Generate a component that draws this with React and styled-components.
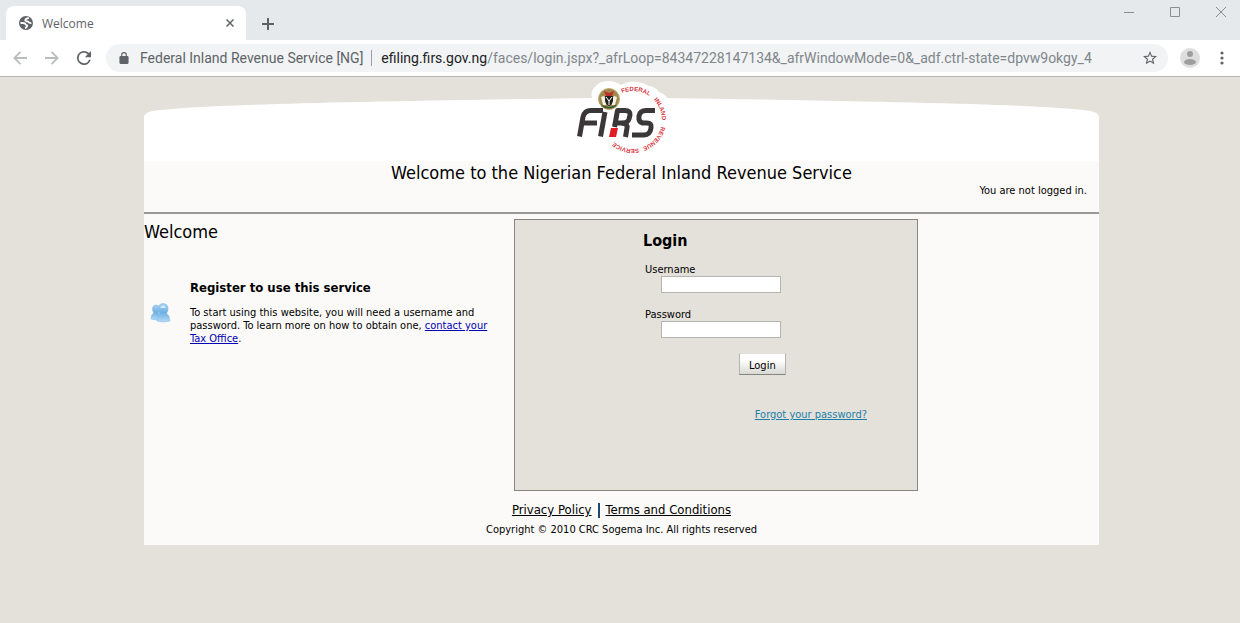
import { useState } from 'react'
import styled, { createGlobalStyle } from 'styled-components'

const uiFont = '"Open Sans", "Noto Sans", sans-serif'
const addressFont = 'Roboto, "Open Sans", sans-serif'
const pageFont = '"DejaVu Sans Condensed", "DejaVu Sans", sans-serif'

const GlobalStyle = createGlobalStyle`
	* {
		box-sizing: border-box;
	}

	body {
		margin: 0;
		background: #e4e1da;
		color: #000;
		font-family: ${pageFont};
		font-size: 11px;
		line-height: 13px;
	}

	svg {
		display: block;
		flex: none;
	}
`

const TabStrip = styled.div`
	display: flex;
	justify-content: space-between;
	height: 40px;
	padding-left: 6px;
	background: #e6e9ec;
`

const TabGroup = styled.div`
	display: flex;
	align-items: flex-end;
`

const Tab = styled.div`
	display: flex;
	align-items: center;
	gap: 9px;
	width: 240px;
	height: 34px;
	padding: 0 8px 0 13px;
	border-radius: 8px 8px 0 0;
	background: #fff;
	color: #5f6368;
	font-family: ${uiFont};
	font-size: 12px;
`

const TabTitle = styled.span`
	flex: 1;
`

const IconButton = styled.button`
	display: flex;
	align-items: center;
	justify-content: center;
	flex: none;
	width: ${({ $width = 32 }) => $width}px;
	height: ${({ $height = 32 }) => $height}px;
	padding: 0;
	border: none;
	background: none;
	color: ${({ $color = '#5f6368' }) => $color};
`

const NewTab = styled(IconButton)`
	margin-left: 6px;
`

const WindowButtons = styled.div`
	display: flex;
	gap: 8px;
`

const Toolbar = styled.div`
	display: flex;
	align-items: center;
	height: 37px;
	padding: 0 2px 0 4px;
	border-bottom: 1px solid #b5b4b2;
	background: #fff;
`

const AddressBar = styled.div`
	display: flex;
	align-items: center;
	flex: 1;
	height: 28px;
	margin: 0 6px;
	padding: 0 2px 0 12px;
	border-radius: 14px;
	background: #f1f3f4;
	color: #5f6368;
	font-family: ${addressFont};
	font-size: 14px;
	line-height: 20px;
	white-space: nowrap;
`

const SiteOwner = styled.span`
	margin-left: 10px;
	padding-right: 8px;
	line-height: 16px;
	border-right: 1px solid #9aa0a6;
`

const Url = styled.span`
	flex: 1;
	min-width: 0;
	overflow: hidden;
	padding-left: 9px;
	color: #80868b;
`

const Host = styled.span`
	color: #202124;
`

const Page = styled.main`
	padding: 0 141px 40px 144px;
`

const Banner = styled.svg`
	width: 100%;
	height: auto;
`

const Sheet = styled.div`
	background: #fbfaf8;
`

const Intro = styled.header`
	height: 53px;
	padding: 1px 12px 0;
	border-bottom: 2px solid #999;
`

const Title = styled.h1`
	margin: 0;
	font-size: 18px;
	font-weight: normal;
	line-height: 22px;
	text-align: center;
`

const Status = styled.p`
	margin: 0;
	text-align: right;
`

const Columns = styled.div`
	display: grid;
	grid-template-columns: 370px 404px;
	padding-top: 5px;
`

const Heading = styled.h2`
	margin: 0;
	font-size: 18px;
	font-weight: normal;
	line-height: 26px;
`

const Register = styled.section`
	display: grid;
	grid-template-columns: 46px 300px;
	align-items: center;
	margin-top: 35px;
`

const PeopleIcon = styled.svg`
	margin-left: 6px;
`

const RegisterTitle = styled.h3`
	margin: 0 0 10px;
	font-size: 13px;
	line-height: 16px;
`

const Text = styled.p`
	margin: 0;
`

const TextLink = styled.a`
	color: #0000b4;
`

const LoginBox = styled.form`
	display: flex;
	flex-direction: column;
	align-items: flex-start;
	height: 272px;
	padding: 11px 50px 0 128px;
	border: 1px solid #858580;
	background: #e4e1da;
`

const LoginTitle = styled.h2`
	margin: 0 0 12px;
	font-size: 16px;
	line-height: 20px;
`

const Field = styled.div`
	display: flex;
	flex-direction: column;
	margin: 0 0 15px 2px;
`

const Input = styled.input`
	width: 120px;
	height: 17px;
	margin-left: 16px;
	padding: 1px 3px;
	border: 1px solid #b4b4b0;
	background: #fff;
	font: inherit;
`

const LoginButton = styled.button`
	height: 22px;
	margin-left: 96px;
	padding: 2px 9px 0;
	border: 1px solid #b4b4b0;
	border-top-color: #e0dfda;
	border-bottom-color: #858580;
	background: linear-gradient(#fff 30%, #d8d8d4);
	color: #000;
	font: inherit;
`

const ForgotLink = styled.a`
	align-self: flex-end;
	margin-top: 33px;
	color: #1d7fa8;
`

const Footer = styled.footer`
	padding: 11px 0 9px;
	text-align: center;
`

const FooterLinks = styled.nav`
	display: flex;
	justify-content: center;
	gap: 6px;
	margin-bottom: 5px;
	font-size: 13px;
	line-height: 16px;
`

const FooterLink = styled.a`
	color: #000;
`

const Divider = styled.span`
	width: 2px;
	margin-top: 1px;
	background: #1c4a6e;
`

const GlobeIcon = () => (
	<svg width="14" height="14" viewBox="0 0 14 14" aria-hidden="true">
		<circle cx="7" cy="7" r="7" fill="#5f6368" />
		<path
			fill="none"
			stroke="#fff"
			strokeWidth="1.800"
			strokeLinejoin="round"
			d="M1.500 7H4Q6 7 6.500 8.200Q7 9.300 8.300 9.300Q8 11.300 6 12.200M9.800 2Q6.500 2.500 6.300 4.200Q6.500 5.500 9 5.500Q10.500 7.500 12.400 7"
		/>
	</svg>
)

// startOffset of every word along the ring
const ringWords = [
	['FEDERAL', 0],
	['INLAND', 34],
	['REVENUE', 63],
	['SERVICE', 96],
]

const Logo = () => (
	<g>
		<path
			fill="#fff"
			d="M430 22H448Q446 14 451 10Q455 4 464 4Q471 4 477 8Q485 3 493 5Q500 6 505 9Q512 10 515 15Q521 17 524 22V84H430Z"
		/>
		<circle cx="465" cy="22" r="10.500" fill="#a08a52" stroke="#c4ad6c" />
		<path fill="#2f5c35" d="M457 27q8 6 16 0l-2 3q-6 3-12 0z" />
		<path fill="#f4f0e4" d="M457 20l3-1 2 3v6h-3zM473 20l-3-1-2 3v6h3z" />
		<path fill="#bd3128" d="M460 14l5 2 5-2-2 5h-6z" />
		<path fill="#25221e" d="M461 19h8v5q-1 4-4 5q-3-1-4-5z" />
		<path stroke="#fff" strokeWidth="1" fill="none" d="M462 20l3 4 3-4M465 24v4" />
		<g fill="none" stroke="#3b3637" strokeWidth="5" strokeLinejoin="round">
			<path d="M435.500 59.500L439 40Q440.500 33.500 447 33.500H459" />
			<path d="M438 46H453" />
			<path d="M456.500 59.500L461 35" />
			<path d="M470.500 50L473.500 33.500H481Q486.500 33.500 486 38L485 42Q484 46 478 46H473" />
			<path d="M478 46Q484 47 483 51L481.500 60" />
			<path d="M511 33.500H502Q496 33.500 495 39Q494 46 500 46H503Q508 46 507 51Q506 58 500 58H488" />
		</g>
		<path fill="#e01b24" d="M467 51h7l-2 9h-7z" />
		<defs>
			<path id="firs-ring" d="M478.100 16.100A29 29 0 1 1 465 59.300" />
		</defs>
		<text fill="#d8323c" fontFamily="Liberation Sans, sans-serif" fontSize="6" fontWeight="bold">
			{ringWords.map(([word, offset]) => (
				<textPath key={word} href="#firs-ring" startOffset={offset}>
					{word}
				</textPath>
			))}
		</text>
	</g>
)

const BrowserBar = () => (
	<div>
		<TabStrip>
			<TabGroup>
				<Tab>
					<GlobeIcon />
					<TabTitle>Welcome</TabTitle>
					<IconButton $width={16} $height={16} aria-label="Close tab">
						<svg width="8" height="8" viewBox="0 0 8 8" stroke="currentColor" strokeWidth="1.500">
							<path d="M0.500 0.500L7.500 7.500M7.500 0.500L0.500 7.500" />
						</svg>
					</IconButton>
				</Tab>
				<NewTab aria-label="New tab">
					<svg width="12" height="12" viewBox="0 0 12 12" stroke="currentColor" strokeWidth="2">
						<path d="M0 6H12M6 0V12" />
					</svg>
				</NewTab>
			</TabGroup>
			<WindowButtons>
				<IconButton $width={38} $height={24} $color="#8a8d90" aria-label="Minimize">
					<svg width="10" height="11" viewBox="0 0 10 11" stroke="currentColor">
						<path d="M0 5.500H10" />
					</svg>
				</IconButton>
				<IconButton $width={38} $height={24} $color="#8a8d90" aria-label="Maximize">
					<svg width="10" height="10" viewBox="0 0 10 10" fill="none" stroke="currentColor">
						<path d="M0.500 0.500H9.500V9.500H0.500Z" />
					</svg>
				</IconButton>
				<IconButton $width={38} $height={24} $color="#8a8d90" aria-label="Close">
					<svg width="10" height="10" viewBox="0 0 10 10" stroke="currentColor">
						<path d="M0 0L10 10M10 0L0 10" />
					</svg>
				</IconButton>
			</WindowButtons>
		</TabStrip>
		<Toolbar>
			<IconButton $color="#babcbe" aria-label="Back">
				<svg width="14" height="14" viewBox="0 0 14 14" fill="none" stroke="currentColor" strokeWidth="1.800">
					<path d="M14 7H1.500M7.500 0.800L1.300 7L7.500 13.200" />
				</svg>
			</IconButton>
			<IconButton $color="#babcbe" aria-label="Forward">
				<svg width="14" height="14" viewBox="0 0 14 14" fill="none" stroke="currentColor" strokeWidth="1.800">
					<path d="M0 7H12.500M6.500 0.800L12.700 7L6.500 13.200" />
				</svg>
			</IconButton>
			<IconButton aria-label="Reload">
				<svg width="14" height="14" viewBox="4 4 16 16" fill="currentColor">
					<path d="M17.650 6.350A7.960 7.960 0 0 0 12 4a8 8 0 1 0 7.730 10h-2.080A6 6 0 1 1 12 6c1.660 0 3.140.69 4.220 1.780L13 11h7V4l-2.350 2.350z" />
				</svg>
			</IconButton>
			<AddressBar>
				<svg width="12" height="12" viewBox="4 1 16 21" fill="currentColor" aria-hidden="true">
					<path d="M18 8h-1V6A5 5 0 0 0 7 6v2H6a2 2 0 0 0-2 2v10a2 2 0 0 0 2 2h12a2 2 0 0 0 2-2V10a2 2 0 0 0-2-2zM9 6a3 3 0 0 1 6 0v2H9z" />
				</svg>
				<SiteOwner>Federal Inland Revenue Service [NG]</SiteOwner>
				<Url>
					<Host>efiling.firs.gov.ng</Host>
					/faces/login.jspx?_afrLoop=84347228147134&amp;_afrWindowMode=0&amp;_adf.ctrl-state=dpvw9okgy_4
				</Url>
				<IconButton aria-label="Bookmark">
					<svg width="14" height="14" viewBox="2 2 20 20" fill="currentColor">
						<path d="M22 9.240l-7.190-.62L12 2 9.190 8.630 2 9.240l5.460 4.730L5.820 21 12 17.270 18.180 21l-1.630-7.030L22 9.240zM12 15.400l-3.760 2.270 1-4.280-3.320-2.880 4.380-.38L12 6.100l1.710 4.040 4.380.38-3.320 2.880 1 4.280L12 15.400z" />
					</svg>
				</IconButton>
			</AddressBar>
			<IconButton aria-label="Profile">
				<svg width="20" height="20" viewBox="0 0 20 20">
					<circle cx="10" cy="10" r="10" fill="#dedede" />
					<circle cx="10" cy="6" r="3" fill="#9e9e9e" />
					<ellipse cx="10" cy="14" rx="6" ry="3" fill="#9e9e9e" />
				</svg>
			</IconButton>
			<IconButton aria-label="Menu">
				<svg width="4" height="14" viewBox="0 0 4 14" fill="currentColor">
					<circle cx="2" cy="2" r="1.600" />
					<circle cx="2" cy="7" r="1.600" />
					<circle cx="2" cy="12" r="1.600" />
				</svg>
			</IconButton>
		</Toolbar>
	</div>
)

const LoginForm = () => {
	const [username, setUsername] = useState('')
	const [password, setPassword] = useState('')

	return (
		<LoginBox onSubmit={(event) => event.preventDefault()}>
			<LoginTitle>Login</LoginTitle>
			<Field>
				<label htmlFor="username">Username</label>
				<Input
					id="username"
					value={username}
					onChange={({ target }) => setUsername(target.value)}
				/>
			</Field>
			<Field>
				<label htmlFor="password">Password</label>
				<Input
					id="password"
					type="password"
					value={password}
					onChange={({ target }) => setPassword(target.value)}
				/>
			</Field>
			<LoginButton type="submit">Login</LoginButton>
			<ForgotLink href="#forgot">Forgot your password?</ForgotLink>
		</LoginBox>
	)
}

const App = () => (
	<>
		<GlobalStyle />
		<BrowserBar />
		<Page>
			<Banner viewBox="0 0 955 84" role="img" aria-label="FIRS">
				<path
					fill="#fff"
					d="M0 84V40Q0 36 8 34C50 28 180 25 448 21H524C775 25 905 28 947 34Q955 36 955 40V84Z"
				/>
				<Logo />
			</Banner>
			<Sheet>
				<Intro>
					<Title>Welcome to the Nigerian Federal Inland Revenue Service</Title>
					<Status>You are not logged in.</Status>
				</Intro>
				<Columns>
					<div>
						<Heading>Welcome</Heading>
						<Register>
							<PeopleIcon width="21" height="20" viewBox="0 0 21 20" aria-hidden="true">
								<defs>
									<linearGradient id="people" x1="0" y1="0" x2="0" y2="1">
										<stop offset="0" stopColor="#a9d0f0" />
										<stop offset="0.5" stopColor="#6cb0e4" />
										<stop offset="1" stopColor="#b5dbf6" />
									</linearGradient>
								</defs>
								<g fill="url(#people)" stroke="#8fbfe6" strokeWidth="0.6">
									<path d="M1 16Q1 11 4 10Q2 8 2.500 5Q3 2 6 2Q9 2 9.500 5Q10 8 8 10Q11 11 11 16Q6 18 1 16Z" />
									<path d="M7 18Q7 12 9.500 10.500Q7.500 8 8 4Q9.500 0.500 13 0.500Q17 0.500 18 4Q18.500 8 16.500 10.500Q19.500 12 20 18Q13 20 7 18Z" />
								</g>
								<path fill="#d8edfb" d="M10 4.500Q13 0.500 16 4.500Q13 5.500 10 4.500Z" />
							</PeopleIcon>
							<div>
								<RegisterTitle>Register to use this service</RegisterTitle>
								<Text>
									To start using this website, you will need a username and password. To learn more
									on how to obtain one, <TextLink href="#contact">contact your Tax Office</TextLink>.
								</Text>
							</div>
						</Register>
					</div>
					<LoginForm />
				</Columns>
				<Footer>
					<FooterLinks>
						<FooterLink href="#privacy">Privacy Policy</FooterLink>
						<Divider />
						<FooterLink href="#terms">Terms and Conditions</FooterLink>
					</FooterLinks>
					<Text>Copyright © 2010 CRC Sogema Inc. All rights reserved</Text>
				</Footer>
			</Sheet>
		</Page>
	</>
)

export default App
